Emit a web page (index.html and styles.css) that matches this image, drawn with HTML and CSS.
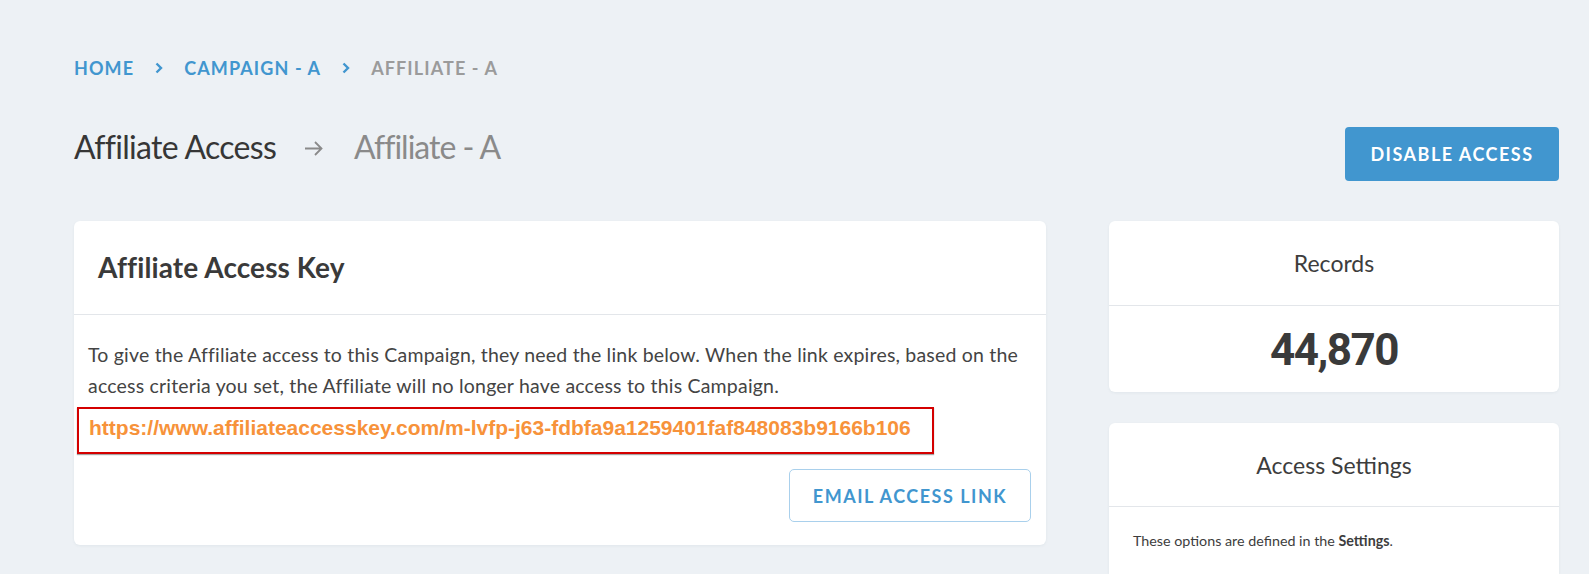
FILE: index.html
```html
<!DOCTYPE html>
<html>
<head>
<meta charset="utf-8">
<link rel="stylesheet" href="styles.css">
</head>
<body>
<div class="page">
  <nav class="crumbs">
    <a class="crumb link">Home</a>
    <svg class="chev" width="10" height="12" viewBox="0 0 10 12"><path d="M2.5 1.5 L7 6 L2.5 10.5" fill="none" stroke="#4196cf" stroke-width="2.4"/></svg>
    <a class="crumb link">Campaign - A</a>
    <svg class="chev" width="10" height="12" viewBox="0 0 10 12"><path d="M2.5 1.5 L7 6 L2.5 10.5" fill="none" stroke="#4196cf" stroke-width="2.4"/></svg>
    <span class="crumb current">Affiliate - A</span>
  </nav>

  <header class="head">
    <h1 class="title">
      <span class="title-main">Affiliate Access</span>
      <svg class="arrow" width="20" height="17" viewBox="0 0 20 17"><path d="M1 8.5 H18 M11 2 L17.5 8.5 L11 15" fill="none" stroke="#8a8a8a" stroke-width="1.8"/></svg>
      <span class="title-sub">Affiliate - A</span>
    </h1>
    <button class="btn-primary">Disable Access</button>
  </header>

  <div class="cols">
    <section class="card main-card">
      <div class="card-head">
        <h2 class="card-title">Affiliate Access Key</h2>
      </div>
      <div class="card-body">
        <p class="desc">To give the Affiliate access to this Campaign, they need the link below. When the link expires, based on the<br>access criteria you set, the Affiliate will no longer have access to this Campaign.</p>
        <div class="keybox">https://www.affiliateaccesskey.com/m-lvfp-j63-fdbfa9a1259401faf848083b9166b106</div>
        <div class="actions">
          <button class="btn-outline">Email Access Link</button>
        </div>
      </div>
    </section>

    <aside class="side">
      <section class="card stat-card">
        <div class="stat-head">Records</div>
        <div class="stat-value">44,870</div>
      </section>
      <section class="card settings-card">
        <div class="stat-head settings-head">Access Settings</div>
        <div class="settings-body">These options are defined in the <b>Settings</b>.</div>
      </section>
    </aside>
  </div>
</div>
</body>
</html>
```
FILE: styles.css
```css
* { box-sizing: border-box; }
html, body { margin: 0; padding: 0; }
body {
  background: #edf1f5;
  font-family: Lato, "Noto Sans", sans-serif;
  color: #3d3d3d;
  width: 1589px;
  height: 574px;
  overflow: hidden;
}
.page {
  padding: 56px 30px 0 74px;
}
.crumbs {
  display: flex;
  align-items: center;
  height: 24px;
}
.crumb {
  font-size: 18px;
  line-height: 24px;
  font-weight: 700;
  text-transform: uppercase;
  letter-spacing: 1.1px;
}
.link { color: #4196cf; }
.current { color: #9b9b9b; }
.chev { margin: 0 20px 0 20px; }

.head {
  display: flex;
  justify-content: space-between;
  align-items: flex-start;
  margin-top: 47px;
  height: 54px;
}
.title {
  margin: 0;
  display: flex;
  align-items: center;
  font-size: 32px;
  line-height: 40px;
  font-weight: 400;
  letter-spacing: -0.7px;
}
.title-main { color: #363636; }
.title-sub { color: #8a8a8a; letter-spacing: -1px; }
.arrow { margin: 2px 30px 0 28px; }
.btn-primary {
  width: 214px;
  height: 54px;
  background: #4196cf;
  border: none;
  border-radius: 4px;
  color: #fff;
  font-family: Lato, sans-serif;
  font-size: 18px;
  font-weight: 700;
  letter-spacing: 1.5px;
  text-transform: uppercase;
  padding: 0;
}

.cols {
  display: flex;
  gap: 63px;
  margin-top: 40px;
}
.card {
  background: #fff;
  border-radius: 6px;
  box-shadow: 0 1px 3px rgba(40, 60, 90, 0.06);
}
.main-card {
  width: 972px;
  height: 324px;
}
.card-head {
  padding: 29px 24px 30px 24px;
  border-bottom: 1px solid #e3e6ea;
}
.card-title {
  margin: 0;
  font-size: 28px;
  line-height: 34px;
  font-weight: 700;
  letter-spacing: 0.1px;
  color: #3a3a3a;
}
.card-body {
  padding: 24px 15px 0 14px;
}
.desc {
  margin: 0;
  font-size: 19.5px;
  line-height: 31px;
  letter-spacing: 0.2px;
  color: #444;
}
.keybox {
  margin: 6px 0 0 -11px;
  width: 857px;
  height: 47px;
  border: 2px solid #d40000;
  padding: 7px 10px 0 10px;
  font-family: "Liberation Sans", Arial, sans-serif;
  font-weight: 700;
  font-size: 21px;
  line-height: 23px;
  color: #f7923a;
  box-shadow: 0 1px 1px rgba(0,0,0,0.35);
}
.actions {
  display: flex;
  justify-content: flex-end;
  margin-top: 15px;
}
.btn-outline {
  width: 242px;
  height: 53px;
  background: #fff;
  border: 1px solid #a9d0ec;
  border-radius: 5px;
  color: #4196cf;
  font-family: Lato, sans-serif;
  font-size: 18px;
  font-weight: 700;
  letter-spacing: 1.5px;
  text-transform: uppercase;
  padding: 0;
}

.side {
  width: 450px;
  display: flex;
  flex-direction: column;
  gap: 31px;
}
.stat-card { height: 171px; }
.stat-head {
  text-align: center;
  font-size: 23px;
  line-height: 28px;
  padding: 28px 0 28px;
  border-bottom: 1px solid #e3e6ea;
  color: #3d3d3d;
}
.stat-value {
  text-align: center;
  font-family: Roboto, "Liberation Sans", sans-serif;
  font-weight: 700;
  font-size: 44px;
  line-height: 52px;
  letter-spacing: -1.5px;
  padding-top: 18px;
  color: #3a3a3a;
}
.settings-card {
  height: 151px;
  border-bottom-left-radius: 0;
  border-bottom-right-radius: 0;
}
.settings-head {
  font-size: 23px;
  padding: 28px 0 27px;
}
.settings-body {
  padding: 24px 24px 0;
  font-size: 14.3px;
  line-height: 20px;
  color: #3d3d3d;
}
.settings-body b { font-weight: 700; }
```
